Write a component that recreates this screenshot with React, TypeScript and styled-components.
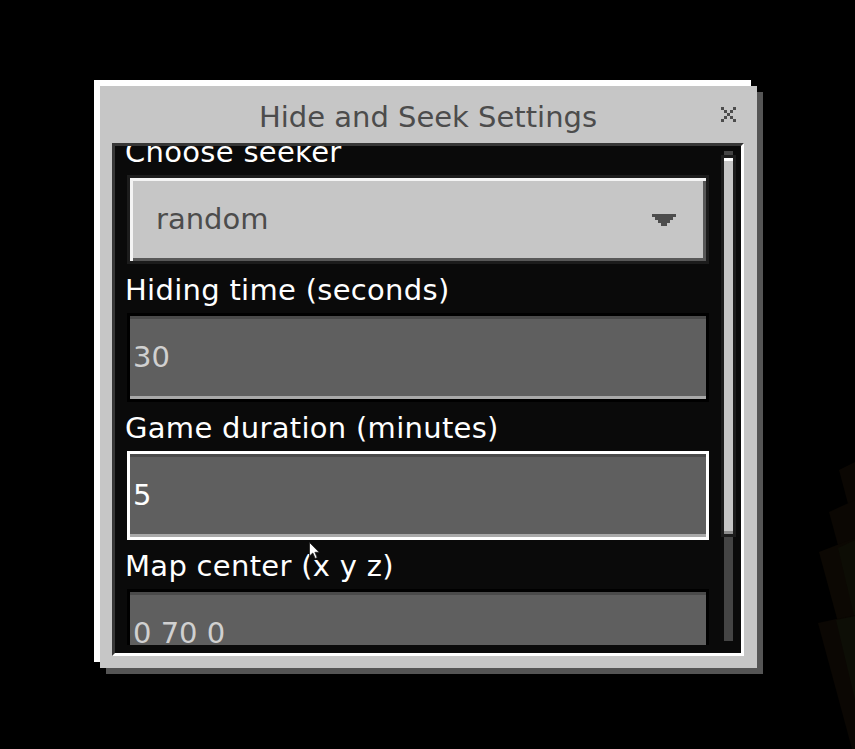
import React from 'react';
import styled, { createGlobalStyle } from 'styled-components';

const GlobalStyle = createGlobalStyle`
  html, body {
    margin: 0;
    padding: 0;
    background: #000;
  }
  body {
    font-family: "DejaVu Sans", "Liberation Sans", sans-serif;
  }
`;

type FormItem =
  | { kind: 'dropdown'; label: string; value: string }
  | { kind: 'text'; label: string; value: string; focused?: boolean };

const items: FormItem[] = [
  { kind: 'dropdown', label: 'Choose seeker', value: 'random' },
  { kind: 'text', label: 'Hiding time (seconds)', value: '30' },
  { kind: 'text', label: 'Game duration (minutes)', value: '5', focused: true },
  { kind: 'text', label: 'Map center (x y z)', value: '0 70 0' },
];

const Stage = styled.div`
  position: relative;
  width: 855px;
  height: 749px;
  overflow: hidden;
  box-sizing: border-box;
  padding: 86px 0 0 100px;
  background: #000;
`;

const World = styled.svg`
  position: absolute;
  inset: 0;
  pointer-events: none;
`;

/* outer dialog: light gray slab with white top-left and dark bottom-right bevel */
const Dialog = styled.div`
  position: relative;
  z-index: 1;
  width: 657px;
  height: 582px;
  box-sizing: border-box;
  display: flex;
  flex-direction: column;
  padding: 0 13px 12px 12px;
  background: #c6c6c6;
  box-shadow: -6px -6px 0 #ffffff, 6px 6px 0 #555555;
`;

const TitleBar = styled.div`
  height: 57px;
  flex: none;
  box-sizing: border-box;
  padding-top: 15px;
  display: grid;
  grid-template-columns: 1fr auto 1fr;
  align-items: start;
`;

const Title = styled.div`
  grid-column: 2;
  font-size: 29px;
  line-height: 33px;
  color: #4c4c4c;
  white-space: nowrap;
`;

const CloseButton = styled.div`
  grid-column: 3;
  justify-self: end;
  margin: 6px 8px 0 0;
  width: 15px;
  height: 15px;
  display: flex;
`;

/* sunken black well holding the scrolling form */
const Well = styled.div`
  flex: 1;
  display: flex;
  min-height: 0;
  background: #0a0a0a;
  border-top: 3px solid #373737;
  border-left: 3px solid #373737;
  border-right: 3px solid #ffffff;
  border-bottom: 3px solid #ffffff;
`;

const Viewport = styled.div`
  width: 582px;
  flex: none;
  padding-left: 12px;
  margin-bottom: 8px;
  overflow: hidden;
`;

const FormList = styled.div<{ $offset: number }>`
  display: flex;
  flex-direction: column;
  gap: 10px;
  margin-top: ${p => -p.$offset}px;
`;

const FieldGroup = styled.div`
  display: flex;
  flex-direction: column;
`;

const FieldLabel = styled.div`
  margin: 0 0 6px -2px;
  font-size: 29px;
  line-height: 33px;
  letter-spacing: 0.3px;
  color: #ffffff;
  white-space: nowrap;
`;

const Dropdown = styled.div`
  height: 89px;
  box-sizing: border-box;
  display: flex;
  align-items: center;
  justify-content: space-between;
  padding: 0 30px 0 26px;
  background: #c6c6c6;
  border: 3px solid #1c1c1c;
  box-shadow: inset 3px 3px 0 #f4f4f4, inset -3px -3px 0 #585858;
`;

const DropdownValue = styled.span`
  font-size: 29px;
  line-height: 33px;
  color: #4c4c4c;
`;

const TextInput = styled.div<{ $focused?: boolean }>`
  height: 89px;
  box-sizing: border-box;
  display: flex;
  align-items: center;
  padding-left: 3px;
  background: #5f5f5f;
  border: 3px solid ${p => (p.$focused ? '#ffffff' : '#000000')};
  box-shadow: inset 0 3px 0 #4a4a4a, inset 0 -3px 0 #a9a9a9;
`;

const InputValue = styled.span<{ $focused?: boolean }>`
  font-size: 29px;
  line-height: 33px;
  color: ${p => (p.$focused ? '#ffffff' : '#d0d0d0')};
  white-space: pre;
`;

const Track = styled.div`
  width: 9px;
  flex: none;
  margin: 5px 8px 12px 15px;
  background: #444444;
`;

const Thumb = styled.div<{ $top: number; $size: number }>`
  margin-top: ${p => p.$top}px;
  height: ${p => p.$size}px;
  background: #c6c6c6;
  box-shadow: inset 0 3px 0 #ffffff, inset 0 -3px 0 #8b8b8b, 0 0 0 3px #1c1c1c;
`;

const Cursor = styled.svg`
  position: absolute;
  z-index: 2;
  left: 309px;
  top: 542px;
`;

const PixelCross = () => (
  <svg width="15" height="15" viewBox="0 0 5 5" shapeRendering="crispEdges">
    {[[0, 0], [4, 0], [1, 1], [3, 1], [2, 2], [1, 3], [3, 3], [0, 4], [4, 4]].map(([x, y]) => (
      <rect key={`${x}-${y}`} x={x} y={y} width="1" height="1" fill="#4c4c4c" />
    ))}
  </svg>
);

const PixelArrow = () => (
  <svg width="24" height="12" viewBox="0 0 8 4" shapeRendering="crispEdges">
    <rect x="0" y="0" width="8" height="1" fill="#4c4c4c" />
    <rect x="1" y="1" width="6" height="1" fill="#4c4c4c" />
    <rect x="2" y="2" width="4" height="1" fill="#4c4c4c" />
    <rect x="3" y="3" width="2" height="1" fill="#4c4c4c" />
  </svg>
);

export default function App() {
  return (
    <>
      <GlobalStyle />
      <Stage>
        <World width="855" height="749" viewBox="0 0 855 749">
          <polygon points="839,470 855,462 855,530" fill="#0b0703" />
          <polygon points="829,512 855,500 855,608" fill="#0b0703" />
          <polygon points="819,552 855,538 855,685" fill="#0c0803" />
          <polygon points="838,548 855,540 855,620" fill="#0d0d05" />
          <polygon points="818,623 855,615 855,749 852,749" fill="#0b0703" />
          <polygon points="836,620 855,616 855,700" fill="#0d0e06" />
        </World>

        <Dialog>
          <TitleBar>
            <Title>Hide and Seek Settings</Title>
            <CloseButton>
              <PixelCross />
            </CloseButton>
          </TitleBar>

          <Well>
            <Viewport>
              <FormList $offset={10}>
                {items.map(item => (
                  <FieldGroup key={item.label}>
                    <FieldLabel>{item.label}</FieldLabel>
                    {item.kind === 'dropdown' ? (
                      <Dropdown>
                        <DropdownValue>{item.value}</DropdownValue>
                        <PixelArrow />
                      </Dropdown>
                    ) : (
                      <TextInput $focused={item.focused}>
                        <InputValue $focused={item.focused}>{item.value}</InputValue>
                      </TextInput>
                    )}
                  </FieldGroup>
                ))}
              </FormList>
            </Viewport>
            <Track>
              <Thumb $top={7} $size={376} />
            </Track>
          </Well>
        </Dialog>

        <Cursor width="12" height="18" viewBox="0 0 12 18">
          <path d="M0.5 0.5 L0.5 14 L3.8 11 L6.2 16.5 L8.2 15.6 L5.9 10.3 L10.2 10.3 Z" fill="#ffffff" stroke="#222" strokeWidth="0.8" />
        </Cursor>
      </Stage>
    </>
  );
}
